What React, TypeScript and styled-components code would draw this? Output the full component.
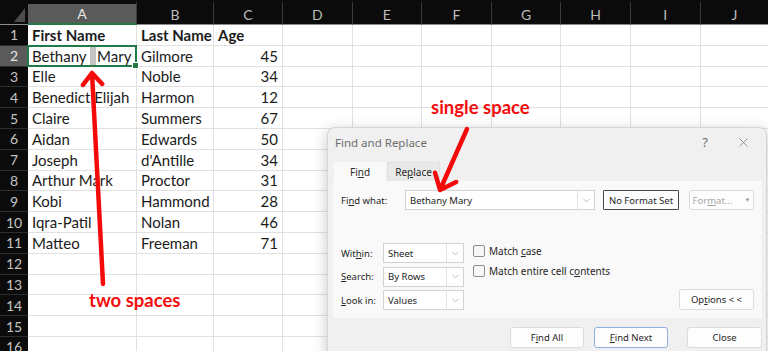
import React from 'react';
import styled, { createGlobalStyle } from 'styled-components';
import { ChevronDown, X } from 'lucide-react';

const GlobalStyle = createGlobalStyle`
  html, body {
    margin: 0;
    padding: 0;
    background: #ffffff;
    overflow: hidden;
  }
  * {
    box-sizing: border-box;
  }
`;

const Page = styled.div`
  position: relative;
  width: 768px;
  height: 351px;
  overflow: hidden;
  font-family: Lato, "Noto Sans", sans-serif;
`;

// row header, A, B, C, D..I, J, and a spare column past the edge
const Sheet = styled.div`
  display: grid;
  grid-template-columns: 28px 109px 77px 69px repeat(6, 69.6px) 69px 40px;
  grid-template-rows: 25px;
  grid-auto-rows: 20.8px;
  background: #ffffff;
`;

const Corner = styled.div`
  background: #0b0b0b;
  border-top: 4px solid #0b0b0b;
  border-bottom: 1px solid #8c8c8c;
  display: flex;
  align-items: flex-end;
  justify-content: flex-end;
  padding: 0 3px 2px 0;
`;

const CornerTriangle = styled.div`
  width: 0;
  height: 0;
  border-left: 11px solid transparent;
  border-bottom: 14px solid #4c4c4c;
`;

const ColHeader = styled.div<{ $active?: boolean }>`
  background: ${p => (p.$active ? '#5a5a5a' : '#0b0b0b')};
  border-top: 4px solid #0b0b0b;
  border-right: 1px solid #3a3a3a;
  border-bottom: ${p => (p.$active ? '2px solid #1f7a45' : '1px solid #8c8c8c')};
  color: ${p => (p.$active ? '#e6e6e6' : '#bdbdbd')};
  font-size: 14px;
  display: flex;
  align-items: center;
  justify-content: center;
`;

const RowHeader = styled.div<{ $active?: boolean }>`
  background: ${p => (p.$active ? '#5a5a5a' : '#0b0b0b')};
  color: ${p => (p.$active ? '#e6e6e6' : '#c4c4c4')};
  border-bottom: 1px solid #2e2e2e;
  font-size: 14px;
  display: flex;
  align-items: center;
  justify-content: center;
`;

const Cell = styled.div<{ $bold?: boolean; $num?: boolean; $selected?: boolean }>`
  position: relative;
  border-right: 1px solid #e1e1e1;
  border-bottom: 1px solid #e1e1e1;
  font-size: 15px;
  font-weight: ${p => (p.$bold ? 700 : 400)};
  color: #1b1b1b;
  display: flex;
  align-items: center;
  justify-content: ${p => (p.$num ? 'flex-end' : 'flex-start')};
  padding: 0 ${p => (p.$num ? '4px' : '0')} 0 ${p => (p.$num ? '0' : '4px')};
  white-space: pre;
  overflow: visible;
  z-index: ${p => (p.$selected ? 2 : 1)};

  ${p =>
    p.$selected &&
    `
    &::after {
      content: '';
      position: absolute;
      inset: -1px -1px -1px -1px;
      border: 2px solid #1f7a45;
      pointer-events: none;
    }
    &::before {
      content: '';
      position: absolute;
      right: -3px;
      bottom: -3px;
      width: 5px;
      height: 5px;
      background: #1f7a45;
      border: 1px solid #ffffff;
      z-index: 3;
    }
  `}
`;

const SpaceMark = styled.span`
  display: inline-block;
  width: 6px;
  align-self: stretch;
  background: #c3c3c3;
  margin: 1px 1px 1px 0;
`;

/* ---------- dialog ---------- */

const Dialog = styled.div`
  position: absolute;
  left: 327px;
  top: 127px;
  width: 440px;
  height: 236px;
  background: #f0f0f0;
  border: 1px solid #d6d6d6;
  border-radius: 8px;
  box-shadow: 0 3px 14px rgba(0, 0, 0, 0.22);
  padding: 0 4px 0 5px;
  font-family: "Noto Sans", "Open Sans", sans-serif;
  font-size: 9.5px;
  color: #262626;
  white-space: nowrap;
  z-index: 5;
`;

const TitleBar = styled.div`
  height: 28px;
  display: flex;
  align-items: center;
  justify-content: space-between;
  padding: 0 11px 0 2px;
`;

const Title = styled.span`
  font-size: 11.5px;
  color: #6e6e6e;
`;

const TitleButtons = styled.div`
  display: flex;
  align-items: center;
  gap: 28px;
  color: #6e6e6e;
  font-size: 13px;
`;

const Tabs = styled.div`
  display: flex;
  align-items: flex-end;
  margin-top: 5px;
  height: 20px;
`;

const Tab = styled.div<{ $selected?: boolean }>`
  width: ${p => (p.$selected ? '54px' : '53px')};
  height: ${p => (p.$selected ? '20px' : '19px')};
  background: ${p => (p.$selected ? '#f9f9f9' : '#e9e9e9')};
  border: 1px solid ${p => (p.$selected ? '#f0f0f0' : '#e0e0e0')};
  border-bottom: none;
  display: flex;
  align-items: center;
  justify-content: center;
  font-size: 10px;
  color: #2a2a2a;
`;

const Panel = styled.div`
  background: #f9f9f9;
  height: 137px;
  padding: 9px 8px 9px 8px;
  display: flex;
  flex-direction: column;
`;

const FindRow = styled.div`
  display: flex;
  align-items: center;
  height: 20px;
`;

const FindLabel = styled.span`
  width: 64px;
`;

const Combo = styled.div<{ $width: number }>`
  width: ${p => p.$width}px;
  height: 20px;
  background: #ffffff;
  border: 1px solid #d2d2d2;
  display: flex;
  align-items: center;
  flex-shrink: 0;
`;

const ComboText = styled.span`
  flex: 1;
  padding-left: 4px;
  color: #222;
  white-space: pre;
`;

const ComboArrow = styled.span`
  width: 17px;
  height: 100%;
  border-left: 1px solid #e2e2e2;
  display: flex;
  align-items: center;
  justify-content: center;
  color: #8a8a8a;
`;

const Spacer = styled.div<{ $w: number }>`
  width: ${p => p.$w}px;
  flex-shrink: 0;
`;

const PlainButton = styled.div<{ $width: number; $variant?: 'dark' | 'disabled' | 'primary' }>`
  width: ${p => p.$width}px;
  height: ${p => (p.$variant === 'dark' || p.$variant === 'disabled' ? '20px' : '21px')};
  background: #fdfdfd;
  border: ${p =>
    p.$variant === 'dark'
      ? '1.5px solid #4a4a4a'
      : p.$variant === 'primary'
      ? '1.5px solid #8fb2dd'
      : '1px solid #dcdcdc'};
  border-radius: ${p => (p.$variant === 'dark' ? '1px' : '3px')};
  color: ${p => (p.$variant === 'disabled' ? '#a8a8a8' : '#262626')};
  display: flex;
  align-items: center;
  justify-content: center;
  gap: 12px;
  font-size: 9.5px;
  flex-shrink: 0;
`;

const CloseButton = styled(PlainButton)`
  margin-left: 9px;
`;

const DropCaret = styled.span`
  font-size: 6px;
  color: #9a9a9a;
`;

const OptionsArea = styled.div`
  display: flex;
  margin-top: 33px;
  flex: 1;
`;

const SelectColumn = styled.div`
  display: flex;
  flex-direction: column;
  gap: 3.5px;
`;

const SelectRow = styled.div`
  display: flex;
  align-items: center;
`;

const SelectLabel = styled.span`
  width: 42px;
`;

const CheckColumn = styled.div`
  display: flex;
  flex-direction: column;
  gap: 6px;
  margin-left: 9px;
  padding-top: 1px;
`;

const CheckRow = styled.div`
  display: flex;
  align-items: center;
  gap: 4px;
  font-size: 10px;
`;

const CheckBox = styled.span`
  width: 12px;
  height: 12px;
  border: 1px solid #8d8d8d;
  border-radius: 2px;
  background: #f7f7f7;
`;

const OptionsButtonWrap = styled.div`
  margin-left: auto;
  display: flex;
  align-items: flex-end;
`;

const Footer = styled.div`
  display: flex;
  justify-content: flex-end;
  padding: 9px 0 0 0;
  gap: 10px;
`;

/* ---------- annotations ---------- */

const Note = styled.div<{ $x: number; $y: number }>`
  position: absolute;
  left: ${p => p.$x}px;
  top: ${p => p.$y}px;
  color: #f20d0d;
  font-family: Lato, "Open Sans", sans-serif;
  font-weight: 700;
  font-size: 18.5px;
  white-space: nowrap;
  z-index: 10;
`;

const ArrowLayer = styled.svg`
  position: absolute;
  left: 0;
  top: 0;
  z-index: 9;
  pointer-events: none;
`;

type Arrow = { tail: [number, number]; tip: [number, number]; head: number };

const arrowPath = ({ tail, tip, head }: Arrow) => {
  const dx = tail[0] - tip[0];
  const dy = tail[1] - tip[1];
  const len = Math.hypot(dx, dy);
  const ux = dx / len;
  const uy = dy / len;
  const ang = (40 * Math.PI) / 180;
  const rot = (s: number) => [
    tip[0] + head * (ux * Math.cos(s * ang) - uy * Math.sin(s * ang)),
    tip[1] + head * (ux * Math.sin(s * ang) + uy * Math.cos(s * ang)),
  ];
  const a = rot(1);
  const b = rot(-1);
  return `M${tail[0]} ${tail[1]} L${tip[0]} ${tip[1]} M${a[0]} ${a[1]} L${tip[0]} ${tip[1]} L${b[0]} ${b[1]}`;
};

const arrows: Arrow[] = [
  { tail: [103, 284], tip: [92, 73], head: 15 },
  { tail: [467, 129], tip: [440, 190], head: 18 },
];

const columns = ['A', 'B', 'C', 'D', 'E', 'F', 'G', 'H', 'I', 'J'];

const rows: [string, string, string][] = [
  ['First Name', 'Last Name', 'Age'],
  ['Bethany  Mary', 'Gilmore', '45'],
  ['Elle', 'Noble', '34'],
  ['Benedict Elijah', 'Harmon', '12'],
  ['Claire', 'Summers', '67'],
  ['Aidan', 'Edwards', '50'],
  ['Joseph', "d'Antille", '34'],
  ['Arthur Mark', 'Proctor', '31'],
  ['Kobi', 'Hammond', '28'],
  ['Iqra-Patil', 'Nolan', '46'],
  ['Matteo', 'Freeman', '71'],
];

const TOTAL_ROWS = 16;
const EMPTY_COLS = 8; // D..J plus the spare one

const Chevron = () => <ChevronDown size={11} strokeWidth={1.3} />;

const App = (): React.ReactElement => {
  const renderFirst = (text: string, i: number) => {
    if (i === 1) {
      return (
        <>
          {'Bethany '}
          <SpaceMark> </SpaceMark>
          {'Mary'}
        </>
      );
    }
    return text;
  };

  return (
    <Page>
      <GlobalStyle />
      <Sheet>
        <Corner>
          <CornerTriangle />
        </Corner>
        {columns.map(c => (
          <ColHeader key={c} $active={c === 'A'}>
            {c}
          </ColHeader>
        ))}
        <ColHeader />
        {Array.from({ length: TOTAL_ROWS }, (_, i) => {
          const data = rows[i];
          return (
            <React.Fragment key={i}>
              <RowHeader $active={i === 1}>{i + 1}</RowHeader>
              <Cell $bold={i === 0} $selected={i === 1}>
                {data ? renderFirst(data[0], i) : ''}
              </Cell>
              <Cell $bold={i === 0}>{data ? data[1] : ''}</Cell>
              <Cell $bold={i === 0} $num={i > 0}>
                {data ? data[2] : ''}
              </Cell>
              {Array.from({ length: EMPTY_COLS }, (_, j) => (
                <Cell key={j} />
              ))}
            </React.Fragment>
          );
        })}
      </Sheet>

      <Dialog>
        <TitleBar>
          <Title>Find and Replace</Title>
          <TitleButtons>
            <span>?</span>
            <X size={15} strokeWidth={1.1} />
          </TitleButtons>
        </TitleBar>
        <Tabs>
          <Tab $selected>
            <span>
              Fi<u>n</u>d
            </span>
          </Tab>
          <Tab>
            <span>
              Re<u>p</u>lace
            </span>
          </Tab>
        </Tabs>
        <Panel>
          <FindRow>
            <FindLabel>
              Fi<u>n</u>d what:
            </FindLabel>
            <Combo $width={190}>
              <ComboText>Bethany Mary</ComboText>
              <ComboArrow>
                <Chevron />
              </ComboArrow>
            </Combo>
            <Spacer $w={8} />
            <PlainButton $width={76} $variant="dark">
              No Format Set
            </PlainButton>
            <Spacer $w={10} />
            <PlainButton $width={65} $variant="disabled">
              <span>
                For<u>m</u>at...
              </span>
              <DropCaret>▼</DropCaret>
            </PlainButton>
          </FindRow>
          <OptionsArea>
            <SelectColumn>
              <SelectRow>
                <SelectLabel>
                  Wit<u>h</u>in:
                </SelectLabel>
                <Combo $width={81}>
                  <ComboText>Sheet</ComboText>
                  <ComboArrow>
                    <Chevron />
                  </ComboArrow>
                </Combo>
              </SelectRow>
              <SelectRow>
                <SelectLabel>
                  <u>S</u>earch:
                </SelectLabel>
                <Combo $width={81}>
                  <ComboText>By Rows</ComboText>
                  <ComboArrow>
                    <Chevron />
                  </ComboArrow>
                </Combo>
              </SelectRow>
              <SelectRow>
                <SelectLabel>
                  <u>L</u>ook in:
                </SelectLabel>
                <Combo $width={81}>
                  <ComboText>Values</ComboText>
                  <ComboArrow>
                    <Chevron />
                  </ComboArrow>
                </Combo>
              </SelectRow>
            </SelectColumn>
            <CheckColumn>
              <CheckRow>
                <CheckBox />
                <span>
                  Match <u>c</u>ase
                </span>
              </CheckRow>
              <CheckRow>
                <CheckBox />
                <span>
                  Match entire cell c<u>o</u>ntents
                </span>
              </CheckRow>
            </CheckColumn>
            <OptionsButtonWrap>
              <PlainButton $width={75}>
                <span>
                  Op<u>t</u>ions &lt; &lt;
                </span>
              </PlainButton>
            </OptionsButtonWrap>
          </OptionsArea>
        </Panel>
        <Footer>
          <PlainButton $width={74}>
            <span>
              F<u>i</u>nd All
            </span>
          </PlainButton>
          <PlainButton $width={74} $variant="primary">
            <span>
              <u>F</u>ind Next
            </span>
          </PlainButton>
          <CloseButton $width={75}>Close</CloseButton>
        </Footer>
      </Dialog>

      <ArrowLayer width={768} height={351} viewBox="0 0 768 351">
        {arrows.map((a, i) => (
          <path
            key={i}
            d={arrowPath(a)}
            fill="none"
            stroke="#f50a0a"
            strokeWidth={4.5}
            strokeLinecap="round"
            strokeLinejoin="round"
          />
        ))}
      </ArrowLayer>
      <Note $x={431} $y={96}>
        single space
      </Note>
      <Note $x={89} $y={289}>
        two spaces
      </Note>
    </Page>
  );
};

export default App;
